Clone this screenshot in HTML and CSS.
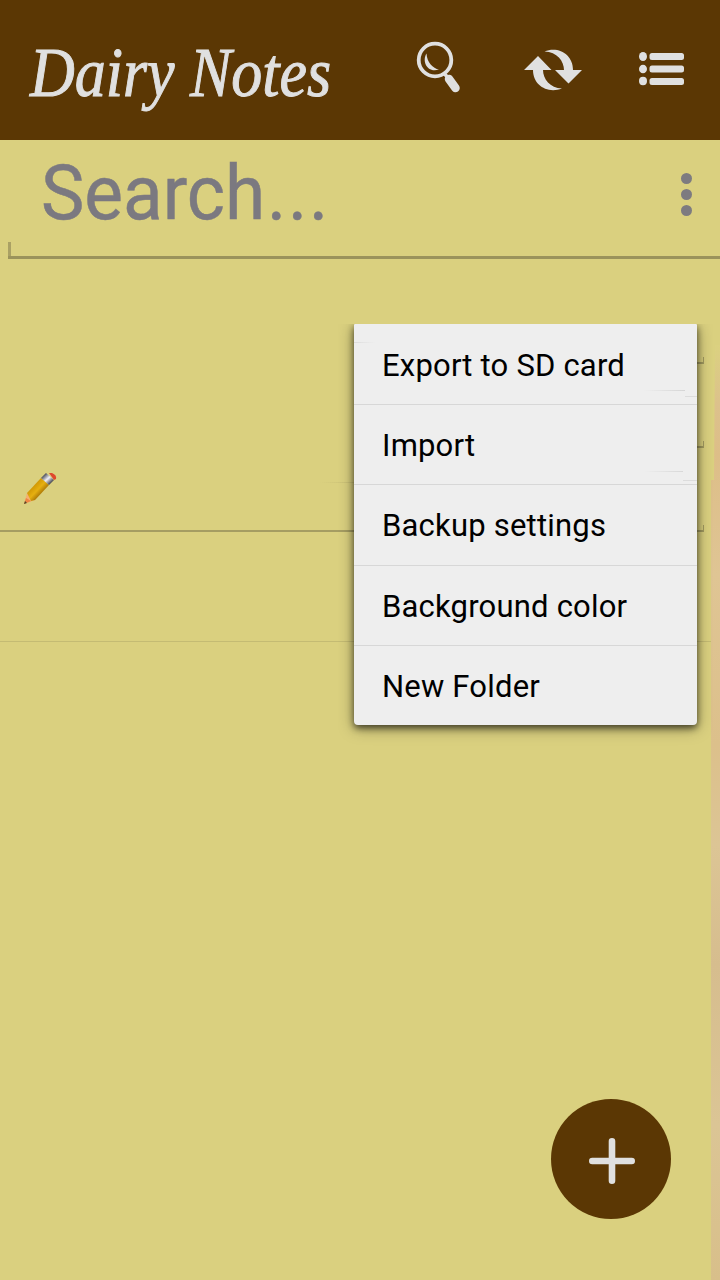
FILE: index.html
```html
<!DOCTYPE html>
<html lang="en">
<head>
  <meta charset="UTF-8" />
  <meta name="viewport" content="width=device-width, initial-scale=1.0" />
  <title>Dairy Notes</title>
  <link rel="stylesheet" href="styles.css">
</head>
<body>
  <header class="topbar">
    <h1>Dairy Notes</h1>
    <div class="actions">
      <svg class="icon-search" viewBox="0 0 48 54" width="48" height="54">
        <circle cx="19" cy="20" r="16.300" fill="none" stroke="#e0e0e0" stroke-width="3.800"/>
        <path d="M10.500 13.500c-5 8 1 20 12.500 16-6-1-12-7-12.500-16z" fill="#e0e0e0"/>
        <path d="M27.500 33l4 4" stroke="#e0e0e0" stroke-width="3.500" fill="none"/>
        <path d="M33 39l6.500 9" stroke="#e0e0e0" stroke-width="8.500" stroke-linecap="round"/>
      </svg>
      <svg class="icon-sync" viewBox="0 0 58 42" width="58" height="42">
        <path d="M0 21L14 7l13.500 14H19c0 9 7 18 19 18.500C23 45 9 36 9 21z" fill="#e0e0e0"/>
        <path d="M58 21L44.500 34.500 31 21h9c0-9-7-18-19.500-18.500C35-3 49 6 49 21z" fill="#e0e0e0"/>
      </svg>
      <svg class="icon-list" viewBox="0 0 46 34" width="46" height="34">
        <g fill="#e0e0e0">
          <ellipse cx="4" cy="4.500" rx="4" ry="4.500"/>
          <ellipse cx="4" cy="17" rx="4" ry="4.300"/>
          <ellipse cx="4" cy="29" rx="4" ry="4.200"/>
          <rect x="10.500" y="1" width="34.500" height="7" rx="2.500"/>
          <rect x="10.500" y="13.500" width="34.500" height="7" rx="2.500"/>
          <rect x="10.500" y="26" width="34.500" height="7" rx="2.500"/>
        </g>
      </svg>
    </div>
  </header>

  <main class="notes">
    <div class="search">
      <span class="placeholder">Search<span class="dots">...</span></span>
      <div class="more"><i></i><i></i><i></i></div>
    </div>

    <div class="note-row">
      <svg class="pencil" viewBox="0 0 34 32" width="34" height="32">
        <defs>
          <linearGradient id="wood" x1="0" y1="0" x2="1" y2="1">
            <stop offset=".25" stop-color="#c98f00"/>
            <stop offset=".5" stop-color="#e6b010"/>
            <stop offset=".75" stop-color="#8f5b00"/>
          </linearGradient>
          <linearGradient id="metal" x1="0" y1="0" x2="1" y2="1">
            <stop offset=".2" stop-color="#4d4f5b"/>
            <stop offset=".5" stop-color="#f0f0f8"/>
            <stop offset=".8" stop-color="#44454f"/>
          </linearGradient>
        </defs>
        <path d="M1 31l3-11 8 7z" fill="#f4b071"/>
        <path d="M4 20L18 5l8 7-14 15-4 1z" fill="url(#wood)"/>
        <path d="M3 25l5 3-7 3z" fill="#ef8543"/>
        <path d="M1 31l1-3 2 2z" fill="#4d4828"/>
        <path d="M18 5l5-5 8 7-5 5z" fill="url(#metal)"/>
        <path d="M26 0h3q5 2 4 6l-2 1z" fill="#df482c"/>
      </svg>
    </div>
    <div class="note-row empty"></div>

    <div class="paper"></div>
    <i class="corner corner-1"></i>
    <i class="corner corner-2"></i>
    <i class="corner corner-3"></i>

    <ul class="menu">
      <li>Export to SD card</li>
      <li>Import</li>
      <li>Backup settings</li>
      <li>Background color</li>
      <li>New Folder</li>
    </ul>

    <button class="add" aria-label="Add note">
      <svg viewBox="0 0 46 46" width="46" height="46">
        <path d="M23 3.300v39.400M3.300 23h39.400" stroke="#e0e0e0" stroke-width="6.600" stroke-linecap="round"/>
      </svg>
    </button>
  </main>
</body>
</html>
```
FILE: styles.css
```css
* {
  box-sizing: border-box;
}

body {
  margin: 0;
  width: 720px;
  height: 1280px;
  overflow: hidden;
  background: #dad07f;
  font-family: Roboto, sans-serif;
}

.topbar {
  display: flex;
  justify-content: space-between;
  height: 140px;
  padding: 0 35px 0 30px;
  background: #5b3704;
}

h1 {
  margin: 33px 0 0;
  color: #e0e0e0;
  font-family: "Liberation Serif", serif;
  font-size: 70px;
  font-style: italic;
  font-weight: normal;
  line-height: 80px;
  white-space: nowrap;
  transform: scaleX(0.885);
  transform-origin: left;
  -webkit-text-stroke: 1px #e0e0e0;
}

.actions {
  display: flex;
  flex: none;
  align-items: flex-start;
}

.icon-search {
  margin: 40px 60px 0 0;
}

.icon-sync {
  margin: 49px 57px 0 0;
}

.icon-list {
  margin-top: 52px;
}

.notes {
  position: relative;
  height: 1140px;
}

.search {
  display: flex;
  justify-content: space-between;
  height: 120px;
  padding: 0 28px 0 41px;
  background:
    linear-gradient(#9b935b, #9b935b) 8px 116px / 712px 3px no-repeat,
    linear-gradient(#aaa164, #aaa164) 8px 102px / 3px 15px no-repeat;
}

.placeholder {
  color: #7b7980;
  font-size: 76px;
  line-height: 107px;
  white-space: nowrap;
  transform: scaleX(0.96);
  transform-origin: left;
  -webkit-text-stroke: 0.5px #7b7980;
}

.dots {
  margin-left: 2px;
  letter-spacing: 1.800px;
}

.more {
  display: flex;
  flex-direction: column;
  gap: 5px;
  margin-top: 33px;
}

.more i {
  width: 11px;
  height: 11px;
  border-radius: 50%;
  background: #7d7b80;
}

.note-row {
  width: 697px;
  height: 272px;
  padding: 213px 0 0 23px;
  border-bottom: 2px solid #a59d62;
  background: linear-gradient(90deg, transparent, #c9bf75) 320px 222px / 34px 1px no-repeat;
}

.note-row.empty {
  height: 110px;
  width: 711px;
  padding: 0;
  border-bottom: 1px solid #c4bb73;
  background: none;
}

.paper {
  position: absolute;
  top: 205px;
  right: 0;
  bottom: 0;
  width: 9px;
  background: linear-gradient(#dbd180, #dcc18c 60px, #ddbe88 110px, #dfc594 230px, #dcc08b 400px, #dcc595 500px, #d6bd8e 620px, #dbc595 780px, #d8bf8a);
  clip-path: polygon(4px 0, 100% 0, 100% 100%, 0 100%, 0 135px, 3px 135px);
}

/* ends of the text field underlines, seen beside the menu */
.corner {
  position: absolute;
  left: 696px;
  width: 8px;
  height: 7px;
  border: solid #a39b60;
  border-width: 0 1px 2px 0;
}

.corner-1 {
  top: 217px;
}

.corner-2 {
  top: 301px;
}

.corner-3 {
  top: 385px;
}

.menu {
  position: absolute;
  top: 184px;
  left: 354px;
  width: 343px;
  height: 401px;
  margin: 0;
  padding: 1px 0 0;
  list-style: none;
  background:
    linear-gradient(90deg, #dcdcdc, transparent) 0 18px / 21px 1px no-repeat,
    linear-gradient(90deg, transparent, #d5d5d5) 290px 66px / 41px 1px no-repeat,
    linear-gradient(#dcdcdc, #dcdcdc) 331px 72px / 12px 1px no-repeat,
    linear-gradient(90deg, transparent, #d8d8d8) 290px 147px / 39px 1px no-repeat,
    linear-gradient(#dcdcdc, #dcdcdc) 329px 156px / 14px 1px no-repeat,
    #eee;
  border-radius: 1px 1px 4px 4px;
  box-shadow: 0 3px 7px rgba(0, 0, 0, 0.6), 0 3px 16px rgba(0, 0, 0, 0.35);
  clip-path: inset(0 -16px -24px -16px);
}

.menu li {
  height: 80.200px;
  padding-left: 28px;
  color: #000;
  font-size: 31px;
  letter-spacing: 0.2px;
  line-height: 82px;
  border-bottom: 1px solid #d7d7d7;
}

.menu li:last-child {
  border-bottom: 0;
}

.add {
  position: absolute;
  top: 959px;
  left: 551px;
  display: flex;
  align-items: center;
  justify-content: center;
  width: 120px;
  height: 120px;
  padding: 4px 0 0 2px;
  border: 0;
  border-radius: 50%;
  background: #5b3704;
}
```
